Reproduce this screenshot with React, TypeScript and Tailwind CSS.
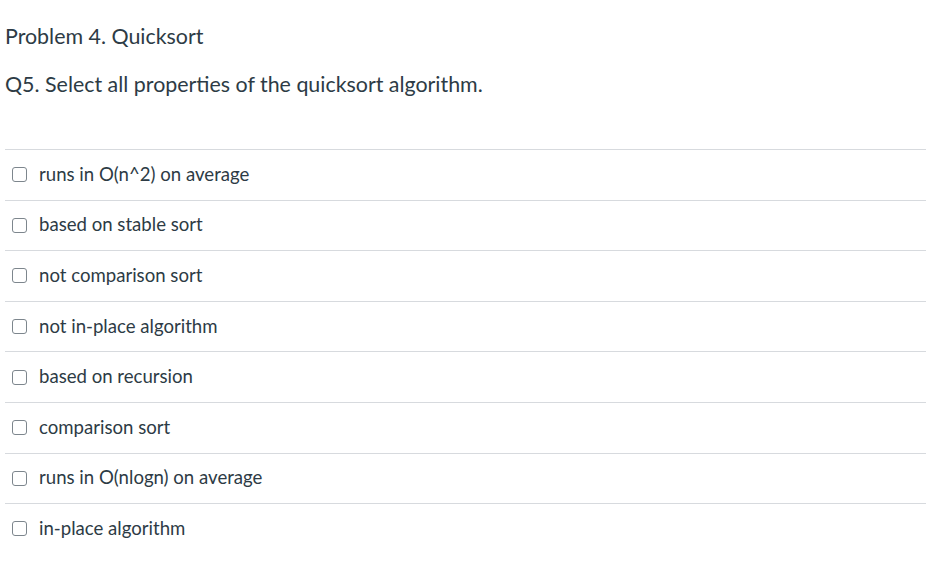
export default function App() {
  const items = [
    "runs in O(n^2) on average",
    "based on stable sort",
    "not comparison sort",
    "not in-place algorithm",
    "based on recursion",
    "comparison sort",
    "runs in O(nlogn) on average",
    "in-place algorithm",
  ];
  return (
    <div className="w-[926px] h-[564px] bg-white text-[#2d3b45] pl-[5px]" style={{ fontFamily: "Lato, 'Noto Sans', sans-serif" }}>
      <div className="pt-[23px] text-[21.4px] leading-[26px]">Problem 4. Quicksort</div>
      <div className="mt-[22px] text-[21.4px] leading-[26px]">Q5. Select all properties of the quicksort algorithm.</div>
      <div className="mt-[52px]">
        {items.map((t) => (
          <div key={t} className="border-t border-[#d7dade] h-[50.6px] flex items-center">
            <span className="ml-[7px] w-[15px] h-[15px] border border-[#7d868d] rounded-[3px] bg-white shrink-0" />
            <span className="ml-[12px] text-[18.6px]">{t}</span>
          </div>
        ))}
      </div>
    </div>
  );
}
